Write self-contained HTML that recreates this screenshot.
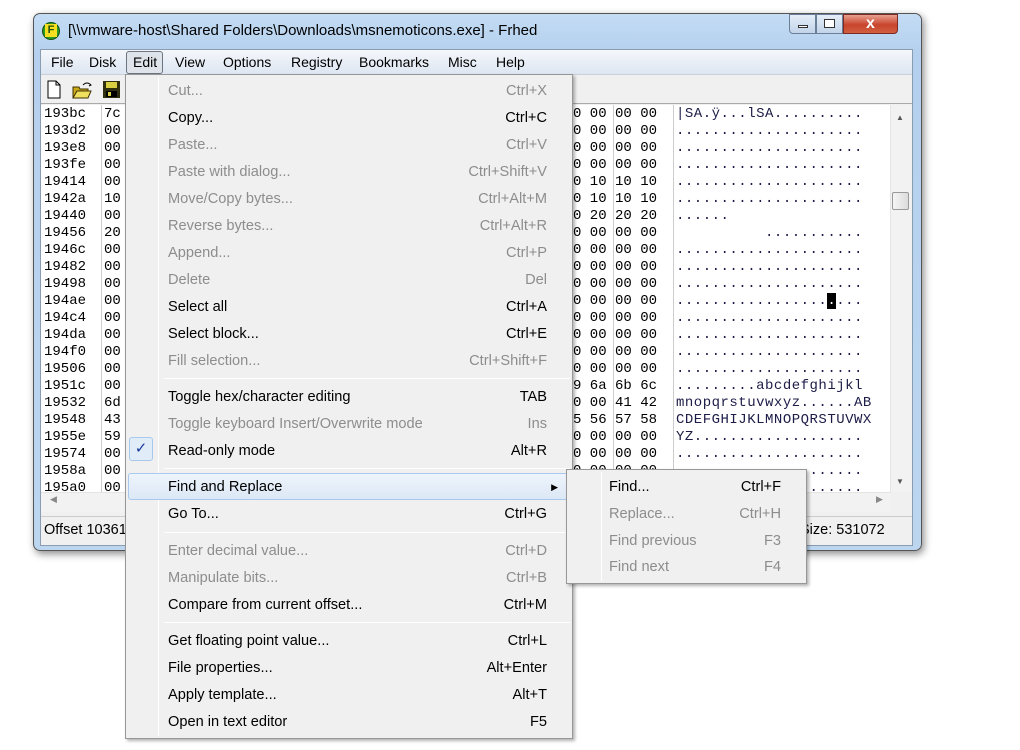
<!DOCTYPE html>
<html><head><meta charset="utf-8"><style>
*{margin:0;padding:0;box-sizing:border-box}
body{width:1020px;height:750px;background:#fff;position:relative;overflow:hidden;font-family:"Liberation Sans","DejaVu Sans",sans-serif;font-size:14px;color:#000}
.abs{position:absolute}
#win{left:33px;top:13px;width:889px;height:538px;border:1px solid #555;border-radius:7px;background:linear-gradient(#c4dcf4,#b4d0ee 40px,#bcd6f0);box-shadow:2px 3px 8px rgba(0,0,0,.45)}
.mono{font-family:"Liberation Mono","DejaVu Sans Mono",monospace;font-size:14px;white-space:pre;line-height:17px}
.mi{position:absolute;height:27px;line-height:29px;font-size:14.6px}
.sc{position:absolute;right:25px;top:0;font-size:14.6px;line-height:29px}
.dis{color:#8d8d8d}
.sep{position:absolute;left:38px;right:2px;height:1px;background:#d7d7d7;border-bottom:1px solid #fff}
</style></head><body>
<div id="win" class="abs"></div>
<div class="abs" style="left:42px;top:22px;width:18px;height:18px;border-radius:50%;background:#2c9a22;border:1px solid #145010"></div>
<div class="abs" style="left:45px;top:24px;width:12px;height:13px;background:#f4e020;font:bold 11px 'Liberation Sans';color:#205010;text-align:center;line-height:13px">F</div>
<div class="abs" style="left:68px;top:22px;font-size:15px;color:#000">[\\vmware-host\Shared Folders\Downloads\msnemoticons.exe] - Frhed</div>
<div class="abs" style="left:789px;top:14px;width:27px;height:20px;border:1px solid #6a7f98;border-radius:0 0 0 4px;background:linear-gradient(#e6eef8,#c2d4ea)"></div>
<div class="abs" style="left:798px;top:25px;width:10px;height:3px;border:1px solid #333;background:#fff"></div>
<div class="abs" style="left:816px;top:14px;width:27px;height:20px;border:1px solid #6a7f98;background:linear-gradient(#e6eef8,#c2d4ea)"></div>
<div class="abs" style="left:824px;top:19px;width:11px;height:9px;border:1px solid #333;background:#fff"></div>
<div class="abs" style="left:843px;top:14px;width:55px;height:20px;border:1px solid #7a2a20;border-radius:0 0 4px 0;background:linear-gradient(#e8a090,#c8442c 55%,#d06040);color:#fff;font:bold 16px 'Liberation Sans';text-align:center;line-height:17px">x</div>
<div class="abs" style="left:40px;top:49px;width:873px;height:497px;background:#f0f0f0;border:1px solid #8a9cb0"></div>
<div class="abs" style="left:41px;top:50px;width:871px;height:25px;background:linear-gradient(#f4f7fb,#dde6f2);border-bottom:1px solid #c8d0da"></div>
<div class="abs" style="left:51px;top:53px;font-size:14px;line-height:18px">
<span style="position:absolute;left:0">File</span><span style="position:absolute;left:38px">Disk</span><span style="position:absolute;left:82px">Edit</span><span style="position:absolute;left:124px">View</span><span style="position:absolute;left:172px">Options</span><span style="position:absolute;left:240px">Registry</span><span style="position:absolute;left:308px">Bookmarks</span><span style="position:absolute;left:397px">Misc</span><span style="position:absolute;left:445px">Help</span></div>
<div class="abs" style="left:126px;top:51px;width:37px;height:23px;border:1px solid #6d7680;border-radius:3px;background:#dfe4ea"></div>
<div class="abs" style="left:133px;top:53px;font-size:14px;line-height:18px">Edit</div>
<div class="abs" style="left:41px;top:76px;width:871px;height:28px;background:#f0f0f0;border-bottom:1px solid #aaa"></div>
<svg class="abs" style="left:45px;top:80px" width="80" height="20"><path d="M3 1h8l4 4v13H3z" fill="#fff" stroke="#000"/><path d="M11 1v4h4" fill="none" stroke="#000"/>
<path d="M28 7h6l1 2h8v9H28z" fill="#c8a818" stroke="#403000"/><path d="M28 18l4-7h14l-3 7z" fill="#f0e060" stroke="#403000"/><path d="M38 5q4-4 8 0l-2 1" fill="none" stroke="#000"/>
<rect x="58" y="1" width="17" height="17" fill="#303010" /><rect x="61" y="2" width="11" height="6" fill="#d8d040"/><rect x="61" y="11" width="11" height="6" fill="#000"/><rect x="63" y="12" width="3" height="4" fill="#d8d040"/></svg>
<div class="abs" style="left:41px;top:105px;width:850px;height:387px;background:#fff;overflow:hidden">
<div class="abs" style="left:60px;top:0;width:1px;height:387px;background:#ccc"></div>
<div class="abs" style="left:572px;top:0;width:1px;height:387px;background:#ccc"></div>
<div class="abs" style="left:632px;top:0;width:1px;height:387px;background:#ccc"></div>
<div class="abs mono" style="left:3px;top:1px;color:#000">193bc
193d2
193e8
193fe
19414
1942a
19440
19456
1946c
19482
19498
194ae
194c4
194da
194f0
19506
1951c
19532
19548
1955e
19574
1958a
195a0</div>
<div class="abs mono" style="left:63px;top:1px">7c
00
00
00
00
10
00
20
00
00
00
00
00
00
00
00
00
6d
43
59
00
00
00</div>
<div class="abs mono" style="left:532px;top:1px">0 00 00 00
0 00 00 00
0 00 00 00
0 00 00 00
0 10 10 10
0 10 10 10
0 20 20 20
0 00 00 00
0 00 00 00
0 00 00 00
0 00 00 00
0 00 00 00
0 00 00 00
0 00 00 00
0 00 00 00
0 00 00 00
9 6a 6b 6c
0 00 41 42
5 56 57 58
0 00 00 00
0 00 00 00
0 00 00 00
0 00 00 00</div>
<div class="abs mono" style="left:635px;top:1px;color:#1c1c48;letter-spacing:.5px">|SA.ÿ...lSA..........
.....................
.....................
.....................
.....................
.....................
......
          ...........
.....................
.....................
.....................
.................<span style="background:#000;color:#fff">.</span>...
.....................
.....................
.....................
.....................
.........abcdefghijkl
mnopqrstuvwxyz......AB
CDEFGHIJKLMNOPQRSTUVWX
YZ...................
.....................
.....................
.....................</div>
</div>
<div class="abs" style="left:890px;top:105px;width:21px;height:387px;background:#f2f2f2;border-left:1px solid #e4e4e4"></div>
<div class="abs" style="left:896px;top:113px;font-size:8px;color:#555">▲</div>
<div class="abs" style="left:896px;top:477px;font-size:8px;color:#555">▼</div>
<div class="abs" style="left:892px;top:192px;width:17px;height:18px;border:1px solid #999;border-radius:2px;background:linear-gradient(90deg,#f4f4f4,#dcdcdc)"></div>
<div class="abs" style="left:41px;top:492px;width:850px;height:20px;background:#f2f2f2;border-top:1px solid #e4e4e4"></div>
<div class="abs" style="left:50px;top:494px;font-size:9px;color:#888">◀</div>
<div class="abs" style="left:876px;top:494px;font-size:9px;color:#888">▶</div>
<div class="abs" style="left:41px;top:516px;width:871px;height:29px;background:#f0f0f0;border-top:1px solid #ccc"></div>
<div class="abs" style="left:44px;top:522px;font-size:14.5px">Offset 103612</div>
<div class="abs" style="left:800px;top:522px;font-size:14.5px">Size: 531072</div>
<div class="abs" style="left:125px;top:74px;width:448px;height:665px;background:#f0f0f0;border:1px solid #979797;box-shadow:2px 2px 3px rgba(0,0,0,.3)">
<div class="abs" style="left:32px;top:2px;width:1px;height:659px;background:#e2e3e3;border-right:1px solid #fff"></div>
<div class="mi dis" style="left:42px;right:0;top:2px">Cut...<span class="sc">Ctrl+X</span></div>
<div class="mi" style="left:42px;right:0;top:29px">Copy...<span class="sc">Ctrl+C</span></div>
<div class="mi dis" style="left:42px;right:0;top:56px">Paste...<span class="sc">Ctrl+V</span></div>
<div class="mi dis" style="left:42px;right:0;top:83px">Paste with dialog...<span class="sc">Ctrl+Shift+V</span></div>
<div class="mi dis" style="left:42px;right:0;top:110px">Move/Copy bytes...<span class="sc">Ctrl+Alt+M</span></div>
<div class="mi dis" style="left:42px;right:0;top:137px">Reverse bytes...<span class="sc">Ctrl+Alt+R</span></div>
<div class="mi dis" style="left:42px;right:0;top:164px">Append...<span class="sc">Ctrl+P</span></div>
<div class="mi dis" style="left:42px;right:0;top:191px">Delete<span class="sc">Del</span></div>
<div class="mi" style="left:42px;right:0;top:218px">Select all<span class="sc">Ctrl+A</span></div>
<div class="mi" style="left:42px;right:0;top:245px">Select block...<span class="sc">Ctrl+E</span></div>
<div class="mi dis" style="left:42px;right:0;top:272px">Fill selection...<span class="sc">Ctrl+Shift+F</span></div>
<div class="sep" style="top:303px"></div>
<div class="mi" style="left:42px;right:0;top:308px">Toggle hex/character editing<span class="sc">TAB</span></div>
<div class="mi dis" style="left:42px;right:0;top:335px">Toggle keyboard Insert/Overwrite mode<span class="sc">Ins</span></div>
<div class="abs" style="left:3px;top:362px;width:24px;height:24px;border:1px solid #a8c8ec;border-radius:3px;background:#e0ecf8;color:#1a3a9a;text-align:center;line-height:22px;font-size:15px">✓</div>
<div class="mi" style="left:42px;right:0;top:362px">Read-only mode<span class="sc">Alt+R</span></div>
<div class="sep" style="top:393px"></div>
<div class="abs" style="left:2px;top:398px;width:440px;height:27px;border:1px solid #a8c8ec;border-radius:3px;background:linear-gradient(#eef4fb,#dce8f6)"></div>
<div class="mi" style="left:42px;right:0;top:398px">Find and Replace<span class="sc" style="right:14px;font-size:9px">▶</span></div>
<div class="mi" style="left:42px;right:0;top:425px">Go To...<span class="sc">Ctrl+G</span></div>
<div class="sep" style="top:457px"></div>
<div class="mi dis" style="left:42px;right:0;top:462px">Enter decimal value...<span class="sc">Ctrl+D</span></div>
<div class="mi dis" style="left:42px;right:0;top:489px">Manipulate bits...<span class="sc">Ctrl+B</span></div>
<div class="mi" style="left:42px;right:0;top:516px">Compare from current offset...<span class="sc">Ctrl+M</span></div>
<div class="sep" style="top:547px"></div>
<div class="mi" style="left:42px;right:0;top:552px">Get floating point value...<span class="sc">Ctrl+L</span></div>
<div class="mi" style="left:42px;right:0;top:579px">File properties...<span class="sc">Alt+Enter</span></div>
<div class="mi" style="left:42px;right:0;top:606px">Apply template...<span class="sc">Alt+T</span></div>
<div class="mi" style="left:42px;right:0;top:633px">Open in text editor<span class="sc">F5</span></div>
</div>
<div class="abs" style="left:566px;top:469px;width:241px;height:115px;background:#f0f0f0;border:1px solid #979797;box-shadow:2px 2px 3px rgba(0,0,0,.3)">
<div class="abs" style="left:34px;top:2px;width:1px;height:109px;background:#e2e3e3;border-right:1px solid #fff"></div>
<div class="mi" style="left:42px;right:0;top:3px">Find...<span class="sc">Ctrl+F</span></div>
<div class="mi dis" style="left:42px;right:0;top:30px">Replace...<span class="sc">Ctrl+H</span></div>
<div class="mi dis" style="left:42px;right:0;top:57px">Find previous<span class="sc">F3</span></div>
<div class="mi dis" style="left:42px;right:0;top:83px">Find next<span class="sc">F4</span></div>
</div>
</body></html>
